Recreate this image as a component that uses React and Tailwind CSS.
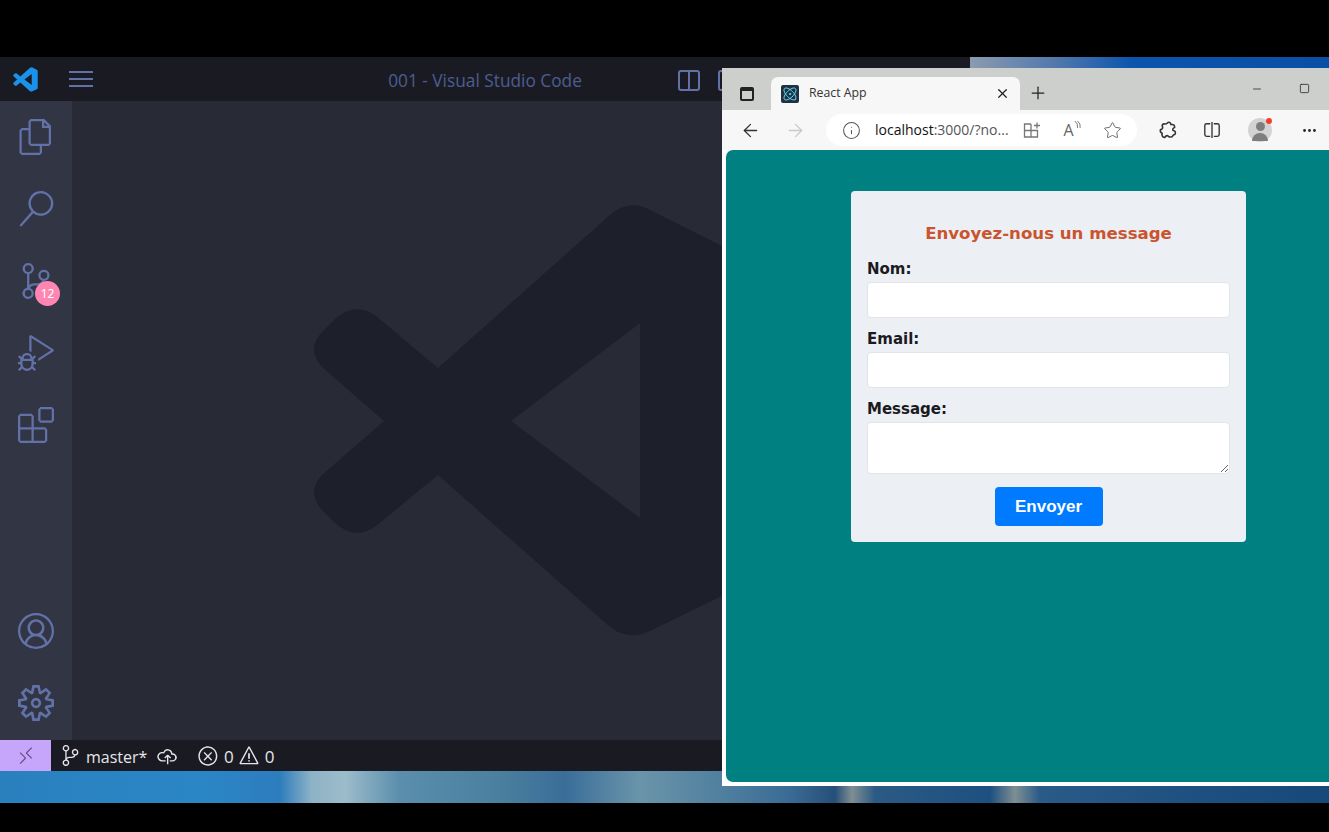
import { ArrowLeft, ArrowRight, Atom, Info, Minus, MoreHorizontal, Plus, Square, Star, X } from 'lucide-react';
import {
  VscAccount,
  VscCloudUpload,
  VscDebugAlt,
  VscError,
  VscExtensions,
  VscFiles,
  VscRemote,
  VscSearch,
  VscSettingsGear,
  VscSourceControl,
  VscWarning,
} from 'react-icons/vsc';

const logoPath =
  'M610 215Q630 198 652 211L730 250Q746 258 746 276L746 566Q746 584 730 592L652 630Q630 642 610 627L438 475L376 526Q355 541 335 523L322 510Q306 492 322 475L384 421L322 367Q306 349 322 332L335 319Q355 301 376 316L438 368ZM640 323L511 421L640 518Z';

function VsLogo({ className }) {
  return (
    <svg viewBox="310 200 440 442" className={className} fill="currentColor">
      <path fillRule="evenodd" d={logoPath} />
    </svg>
  );
}

function ActivityIcon({ icon: Icon, badge }) {
  return (
    <div className="relative h-[72px] flex items-center justify-center">
      <Icon className="w-9 h-9 text-[#6272a8]" />
      {badge && (
        <span className="absolute left-[35px] top-[36px] w-[25px] h-[25px] rounded-full bg-[#ff86b3] text-white text-[12px] flex items-center justify-center font-['Noto_Sans',sans-serif]">
          {badge}
        </span>
      )}
    </div>
  );
}

function Sidebar() {
  return (
    <div className="w-[72px] bg-[#323644] flex flex-col justify-between pb-px">
      <div>
        <ActivityIcon icon={VscFiles} />
        <ActivityIcon icon={VscSearch} />
        <ActivityIcon icon={VscSourceControl} badge="12" />
        <ActivityIcon icon={VscDebugAlt} />
        <ActivityIcon icon={VscExtensions} />
      </div>
      <div>
        <ActivityIcon icon={VscAccount} />
        <ActivityIcon icon={VscSettingsGear} />
      </div>
    </div>
  );
}

function StatusBar() {
  return (
    <div className="h-[31px] bg-[#1a1b22] flex items-center text-[#e6e6ea] text-[16px] font-['Open_Sans',sans-serif]">
      <div className="w-[51px] h-full bg-[#c5a6fb] flex items-center justify-center">
        <VscRemote className="w-5 h-5 text-[#5c4a82]" />
      </div>
      <VscSourceControl className="ml-[9px] w-[21px] h-[21px]" />
      <span className="ml-[5px] mt-[3px] w-[62px]">master*</span>
      <VscCloudUpload className="ml-[8px] w-[22px] h-[22px]" />
      <VscError className="ml-[19px] w-[22px] h-[22px]" />
      <span className="ml-[5px] mt-[3px] text-[17px]">0</span>
      <VscWarning className="ml-[4px] w-[22px] h-[22px]" />
      <span className="ml-[5px] mt-[3px] text-[17px]">0</span>
    </div>
  );
}

function VsCodeWindow() {
  return (
    <div className="w-[970px] h-[714px] flex flex-col">
      <div className="h-[44px] bg-[#1a1b22] flex items-center relative">
        <VsLogo className="ml-[13px] w-[25px] h-[25px] text-[#1b92ea]" />
        <div className="ml-[31px] w-6 flex flex-col gap-[5px]">
          <div className="h-[2px] bg-[#6272a8]" />
          <div className="h-[2px] bg-[#6272a8]" />
          <div className="h-[2px] bg-[#6272a8]" />
        </div>
        <span className="absolute left-0 right-0 top-[11px] text-center text-[17.300px] text-[#4d5d92] font-['Open_Sans',sans-serif]">
          001 - Visual Studio Code
        </span>
        <div className="ml-auto mr-[230px] mt-[2px] flex gap-[18px]">
          <div className="w-[22px] h-[21px] border-2 border-[#6272a8] rounded-[3px] flex justify-center">
            <div className="w-[2px] bg-[#6272a8]" />
          </div>
          <div className="w-[22px] h-[21px] border-2 border-[#6272a8] rounded-[3px]" />
        </div>
      </div>
      <div className="flex-1 flex min-h-0">
        <Sidebar />
        <div className="flex-1 bg-[#282b36] relative overflow-hidden">
          <svg viewBox="72 101 898 639" className="absolute inset-0 w-full h-full text-[#1d1f2a]" fill="currentColor">
            <path fillRule="evenodd" d={logoPath} />
          </svg>
        </div>
      </div>
      <StatusBar />
    </div>
  );
}

function Field({ label, children }) {
  return (
    <div className="mb-[10px]">
      <label className="block h-5 mb-1 text-[15px] leading-[22px] font-bold text-[#1a1a22]">{label}</label>
      {children}
    </div>
  );
}

function ContactForm() {
  return (
    <div className="w-[395px] h-[351px] bg-[#eceff3] rounded-[4px] p-4 font-['DejaVu_Sans',sans-serif]">
      <h2 className="mt-[15px] h-6 mb-[12px] text-center text-[16.600px] leading-6 font-bold text-[#c9542f]">Envoyez-nous un message</h2>
      <Field label="Nom:">
        <input className="w-full h-9 bg-white border border-[#e2e4e8] rounded-[4px]" />
      </Field>
      <Field label="Email:">
        <input className="w-full h-9 bg-white border border-[#e2e4e8] rounded-[4px]" />
      </Field>
      <Field label="Message:">
        <textarea className="block w-full h-[52px] bg-white border border-[#e2e4e8] rounded-[4px] resize-y" />
      </Field>
      <div className="flex justify-center mt-[13px]">
        <button className="w-[108px] h-[39px] bg-[#007bff] text-white rounded-[4px] text-[17px] font-bold font-['Liberation_Sans',sans-serif]">
          Envoyer
        </button>
      </div>
    </div>
  );
}

function BrowserWindow() {
  return (
    <div className="absolute left-[722px] top-[11px] w-[700px] h-[718px] bg-white flex flex-col font-['Open_Sans',sans-serif]">
      <div className="h-[42px] bg-[#cdcfcc] flex items-end text-[#222]">
        <div className="ml-[18px] mb-[9px] w-[14px] h-[14px] border-2 border-[#222] rounded-[2px] border-t-[4px]" />
        <div className="ml-[17px] w-[249px] h-[33px] bg-[#f7f7f7] rounded-t-[7px] flex items-center pl-[10px] pr-[10px]">
          <div className="w-[18px] h-[18px] bg-[#20323f] rounded-[2px] flex items-center justify-center">
            <Atom className="w-4 h-4 text-[#61dafb]" strokeWidth={1.500} />
          </div>
          <span className="ml-[10px] text-[12.300px] text-[#333]">React App</span>
          <X className="ml-auto w-[15px] h-[15px] text-[#222]" strokeWidth={2} />
        </div>
        <Plus className="ml-[8px] mb-[7px] w-[20px] h-[20px]" strokeWidth={1.500} />
        <Minus className="ml-[203px] mb-[15px] w-[12px] h-[12px]" strokeWidth={1.500} />
        <Square className="ml-[36px] mb-[16px] w-[11px] h-[11px]" strokeWidth={1.700} />
      </div>
      <div className="h-[40px] bg-[#f7f7f7] flex items-center text-[#333]">
        <ArrowLeft className="ml-[18px] w-[21px] h-[21px]" strokeWidth={1.500} />
        <ArrowRight className="ml-[24px] w-[21px] h-[21px] text-[#c9c9c9]" strokeWidth={1.500} />
        <div className="ml-[20px] w-[311px] h-[32px] bg-white rounded-full flex items-center pl-[16px]">
          <Info className="w-[19px] h-[19px] text-[#555]" strokeWidth={1.300} />
          <span className="ml-[14px] mb-[1px] text-[14px] text-[#111]">
            localhost<span className="text-[#555]">:3000/?no...</span>
          </span>
          <svg viewBox="0 0 18 18" className="ml-[13px] w-[18px] h-[18px] text-[#777]" fill="none" stroke="currentColor" strokeWidth="1.300">
            <path d="M9 3H2.500V16H15.500V9.500H2.500M9 3V16M12 4.500H18M15 1.500V7.500" />
          </svg>
          <span className="ml-[24px] text-[16px] leading-5 text-[#666] flex items-start">
            A
            <svg viewBox="0 0 8 10" className="w-[7px] h-[9px]" fill="none" stroke="currentColor" strokeWidth="1">
              <path d="M1 1Q5 4 4 9M4 1Q8 4 7 9" />
            </svg>
          </span>
          <Star className="ml-[22px] w-[19px] h-[19px] text-[#666]" strokeWidth={1.200} />
        </div>
        <svg viewBox="0 0 24 24" className="ml-[21px] w-[20px] h-[20px] text-[#333]" fill="none" stroke="currentColor" strokeWidth="1.900" strokeLinejoin="round">
          <path d="M12 3Q15 2 15.500 5.500Q20 4.500 20 9Q17 10 18 12.500Q22 13 20.500 17Q18 17.500 17 20Q13 21 12 19Q10 18 8 21Q4 20 5 16Q2 15 3 11.500Q6 11 5.500 8Q4 6 7 4.500Q10 5.500 12 3Z" />
        </svg>
        <svg viewBox="0 0 20 20" className="ml-[25px] w-[18px] h-[18px] text-[#333]" fill="none" stroke="currentColor" strokeWidth="1.500">
          <path d="M8 3H4Q2 3 2 5V15Q2 17 4 17H8M12 3H16Q18 3 18 5V15Q18 17 16 17H12M10 1V19" />
        </svg>
        <div className="relative ml-[27px] w-[24px] h-[24px] rounded-full bg-[#d3d3d3] flex flex-col items-center overflow-visible">
          <div className="mt-[4px] w-[9px] h-[9px] rounded-full bg-[#7e7e7e]" />
          <div className="mt-[2px] w-[16px] h-[8px] rounded-t-full bg-[#7e7e7e]" />
          <span className="absolute right-0 top-0 w-[6px] h-[6px] rounded-full bg-[#f0402a]" />
        </div>
        <MoreHorizontal className="ml-[29px] w-[17px] h-[17px] text-[#222]" strokeWidth={2} />
      </div>
      <div className="flex-1 ml-1 mb-1 bg-[#008080] rounded-l-[7px] pt-[41px] pl-[125px]">
        <ContactForm />
      </div>
    </div>
  );
}

export default function App() {
  return (
    <div className="w-[1329px] h-[832px] bg-black overflow-hidden">
      <div className="h-[57px]" />
      <div className="relative h-[746px] bg-[linear-gradient(90deg,#2a80bd_0px,#2b86c6_200px,#2d7dbd_280px,#8eb3c6_312px,#9cbccb_345px,#5a8eac_400px,#4a7f9f_500px,#3a6e99_565px,#6a94aa_640px,#50809f_720px,#3a6b94_790px,#254f78_835px,#7f8f92_852px,#2b5a84_875px,#1d4f80_990px,#7d8f92_1015px,#2a5a88_1040px,#1d4f80_1200px,#17487a_1329px)]">
        <div className="absolute left-[970px] right-0 top-0 h-[11px] bg-[linear-gradient(90deg,#8a9bb0_0%,#4f76ac_25%,#0b55ad_45%,#0a4fa5_100%)]" />
        <VsCodeWindow />
        <BrowserWindow />
      </div>
    </div>
  );
}
